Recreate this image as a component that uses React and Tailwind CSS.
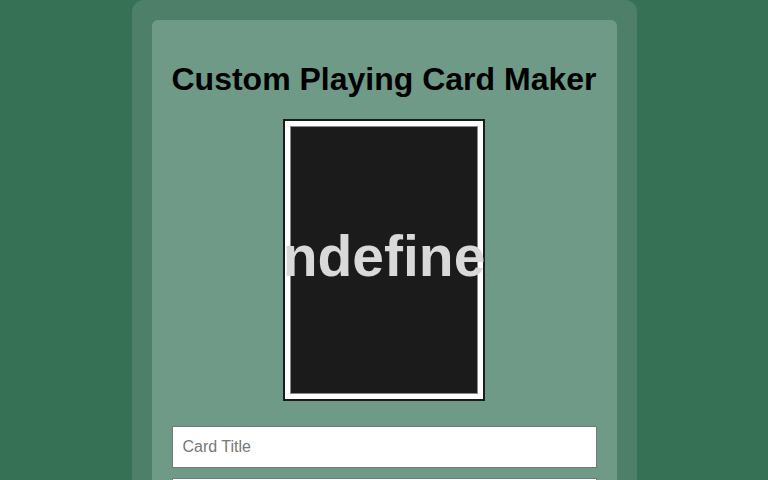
// App.jsx
import { useState } from "react";

// Back face of the card preview, with the title laid over it
const CardPreview = ({ title }) => {
	return (
		<div className="relative mx-auto h-[282px] w-[202px] overflow-hidden bg-[#1b1b1b] p-[2px]">
			<div className="h-full w-full bg-white p-[5px]">
				<div className="h-full w-full border border-[#8a8a8a] bg-[#1b1b1b]"></div>
			</div>
			<div className="absolute inset-0 flex items-center justify-center pb-[8px]">
				<span className="whitespace-nowrap text-[57px] font-bold leading-none text-[#d9d9d9]">
					{String(title)}
				</span>
			</div>
		</div>
	);
};

const App = () => {
	const [card, setCard] = useState({ title: "", subtitle: "" });

	return (
		<div
			className="min-h-screen bg-[#367156]"
			style={{ fontFamily: '"Liberation Sans", Arial, sans-serif' }}
		>
			<div className="mx-auto w-[505px] rounded-xl bg-[#4e8069] p-5">
				<div className="rounded-md bg-[#6f9a87] p-5">
					<h1 className="my-[21px] text-center text-[32px] font-bold leading-[37px] text-black">
						Custom Playing Card Maker
					</h1>

					<CardPreview title={card.title || undefined} />

					<input
						type="text"
						placeholder="Card Title"
						className="mt-[25px] mb-[10px] block h-[42px] w-full border border-[#777777] bg-white px-[10px] text-base text-black placeholder:text-[#777777]"
						onChange={(e) => setCard({ ...card, title: e.target.value })}
					/>
					<input
						type="text"
						placeholder="Card Subtitle"
						className="mb-[10px] block h-[42px] w-full border border-[#777777] bg-white px-[10px] text-base text-black placeholder:text-[#777777]"
						onChange={(e) => setCard({ ...card, subtitle: e.target.value })}
					/>
				</div>
			</div>
		</div>
	);
};

export default App;
